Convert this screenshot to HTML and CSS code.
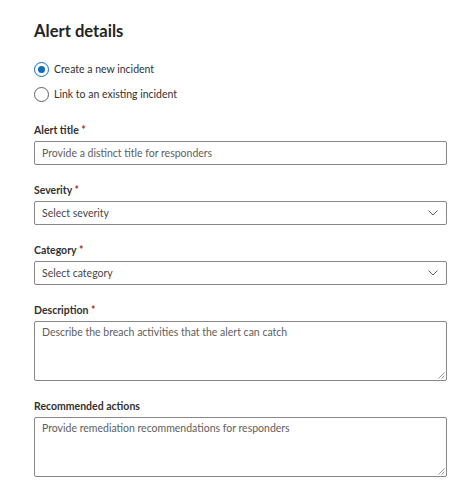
FILE: index.html
```html
<!DOCTYPE html>
<html>
<head>
<meta charset="utf-8">
<link rel="stylesheet" href="styles.css">
</head>
<body>
<div class="panel">
  <h2 class="title">Alert details</h2>
  <div class="radios">
    <label class="radio checked"><span class="dot"></span><span>Create a new incident</span></label>
    <label class="radio"><span class="dot"></span><span>Link to an existing incident</span></label>
  </div>
  <div class="field">
    <div class="label">Alert title <span class="req">*</span></div>
    <div class="input"><span class="ph">Provide a distinct title for responders</span></div>
  </div>
  <div class="field">
    <div class="label">Severity <span class="req">*</span></div>
    <div class="input select"><span class="ph dark">Select severity</span>
      <svg class="chev" width="10" height="6" viewBox="0 0 10 6"><path d="M0.5 0.5 L5 5 L9.5 0.5" fill="none" stroke="#605e5c" stroke-width="1"/></svg>
    </div>
  </div>
  <div class="field">
    <div class="label">Category <span class="req">*</span></div>
    <div class="input select"><span class="ph dark">Select category</span>
      <svg class="chev" width="10" height="6" viewBox="0 0 10 6"><path d="M0.5 0.5 L5 5 L9.5 0.5" fill="none" stroke="#605e5c" stroke-width="1"/></svg>
    </div>
  </div>
  <div class="field">
    <div class="label">Description <span class="req">*</span></div>
    <div class="input area"><span class="ph">Describe the breach activities that the alert can catch</span>
      <svg class="grip" width="7" height="7" viewBox="0 0 7 7"><path d="M6.5 0.5 L0.5 6.5 M6.5 3.5 L3.5 6.5" stroke="#9a9a9a" stroke-width="1"/></svg>
    </div>
  </div>
  <div class="field">
    <div class="label">Recommended actions</div>
    <div class="input area"><span class="ph">Provide remediation recommendations for responders</span>
      <svg class="grip" width="7" height="7" viewBox="0 0 7 7"><path d="M6.5 0.5 L0.5 6.5 M6.5 3.5 L3.5 6.5" stroke="#9a9a9a" stroke-width="1"/></svg>
    </div>
  </div>
</div>
</body>
</html>
```
FILE: styles.css
```css
html, body {
  margin: 0;
  padding: 0;
  background: #ffffff;
}
body {
  font-family: "Segoe UI", Lato, "Open Sans", sans-serif;
  color: #323130;
}
.panel {
  width: 413px;
  padding: 19px 0 0 34px;
}
.title {
  margin: 0;
  font-size: 16.6px;
  font-weight: 700;
  line-height: 24px;
  color: #242424;
}
.radios {
  margin-top: 19px;
  display: flex;
  flex-direction: column;
  gap: 10px;
}
.radio {
  display: flex;
  align-items: center;
  gap: 5px;
  height: 15px;
  font-size: 10.5px;
  line-height: 15px;
  color: #323130;
}
.dot {
  box-sizing: border-box;
  width: 15px;
  height: 15px;
  border-radius: 50%;
  border: 1px solid #616161;
  position: relative;
  flex: none;
}
.radio.checked .dot {
  border-color: #0f6cbd;
}
.radio.checked .dot::after {
  content: "";
  position: absolute;
  left: 3px;
  top: 3px;
  width: 7px;
  height: 7px;
  border-radius: 50%;
  background: #0f6cbd;
}
.field {
  margin-top: 17px;
}
.radios + .field {
  margin-top: 20px;
}
.label {
  font-size: 10.5px;
  font-weight: 700;
  line-height: 16px;
  margin-bottom: 3px;
  color: #323130;
}
.req {
  color: #a4262c;
}
.input {
  box-sizing: border-box;
  height: 24px;
  border: 1px solid #8a8886;
  border-radius: 2px;
  display: flex;
  align-items: center;
  padding: 0 7px;
  position: relative;
}
.ph {
  font-size: 10.5px;
  color: #605e5c;
  white-space: nowrap;
}
.ph.dark {
  color: #484644;
}
.select {
  justify-content: space-between;
}
.chev {
  margin-right: 1px;
}
.area {
  height: 60px;
  align-items: flex-start;
  padding-top: 4px;
}
.grip {
  position: absolute;
  right: 1px;
  bottom: 1px;
}
```
